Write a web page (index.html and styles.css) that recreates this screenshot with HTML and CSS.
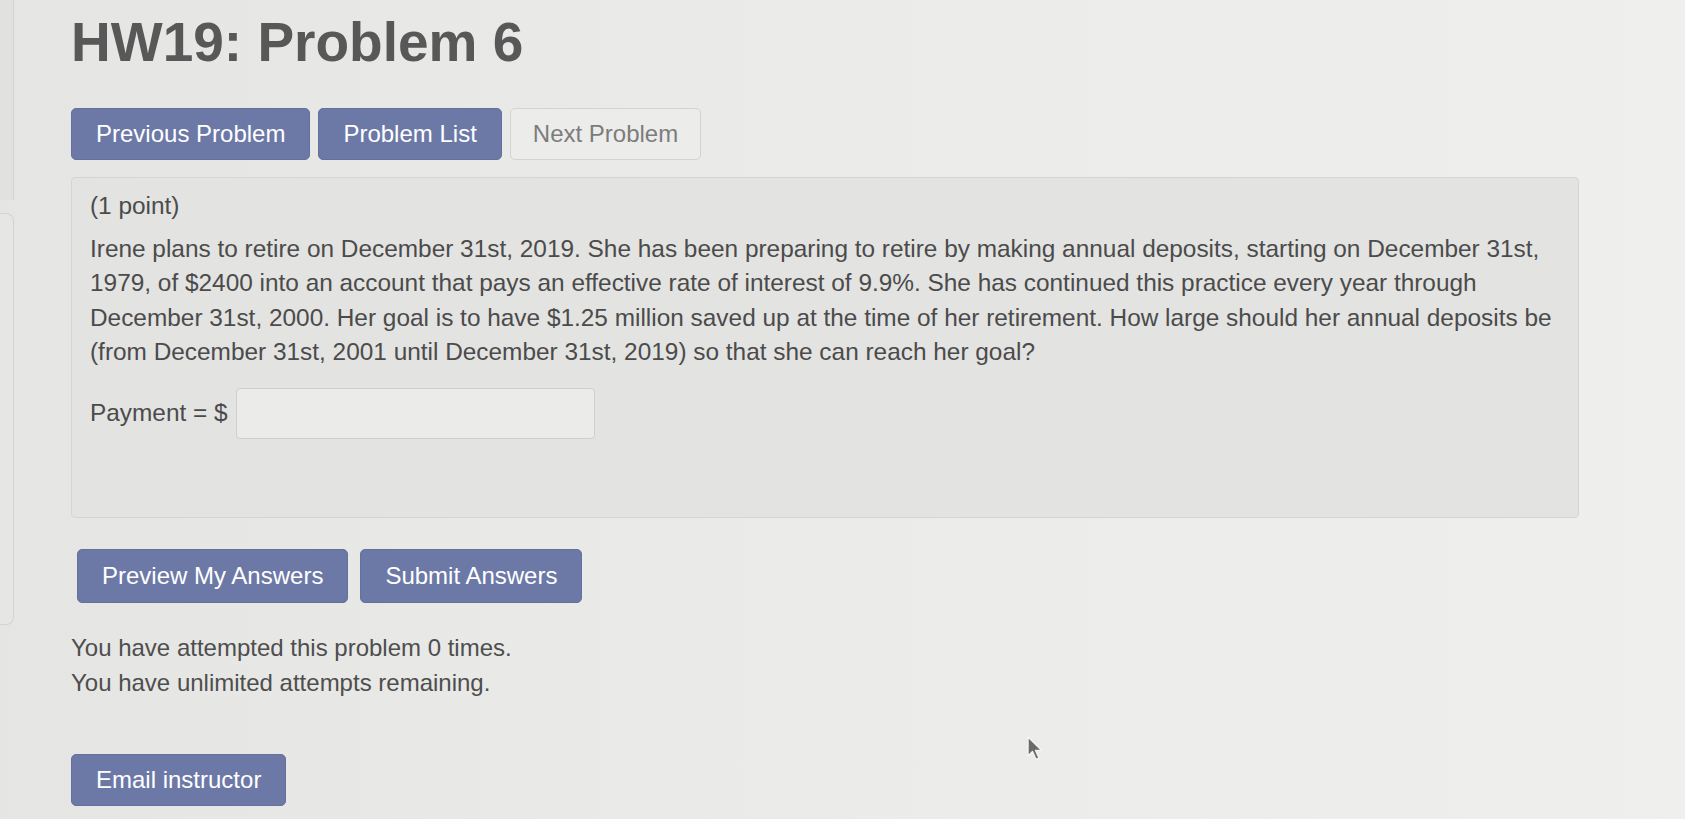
FILE: index.html
```html
<!DOCTYPE html>
<html lang="en">
<head>
<meta charset="utf-8">
<title>HW19: Problem 6</title>
<link rel="stylesheet" href="styles.css">
</head>
<body>
<div class="page">
  <aside class="sidebar">
    <div class="side-top"></div>
    <div class="side-panel"></div>
  </aside>
  <main class="main">
    <h1 class="title">HW19: Problem 6</h1>
    <nav class="nav">
      <a class="btn btn-primary">Previous Problem</a>
      <a class="btn btn-primary">Problem List</a>
      <a class="btn btn-disabled">Next Problem</a>
    </nav>
    <section class="problem">
      <div class="points">(1 point)</div>
      <p class="statement">Irene plans to retire on December 31st, 2019. She has been preparing to retire by making annual deposits, starting on December 31st, 1979, of $2400 into an account that pays an effective rate of interest of 9.9%. She has continued this practice every year through December 31st, 2000. Her goal is to have $1.25 million saved up at the time of her retirement. How large should her annual deposits be (from December 31st, 2001 until December 31st, 2019) so that she can reach her goal?</p>
      <div class="answer-row">
        <label class="answer-label" for="ans">Payment = $</label>
        <input class="answer-input" id="ans" type="text">
      </div>
    </section>
    <div class="submit-row">
      <button class="btn btn-primary btn-tall">Preview My Answers</button>
      <button class="btn btn-primary btn-tall">Submit Answers</button>
    </div>
    <div class="attempts">
      <div>You have attempted this problem 0 times.</div>
      <div>You have unlimited attempts remaining.</div>
    </div>
    <div class="email-row">
      <a class="btn btn-primary">Email instructor</a>
    </div>
  </main>
</div>
<svg class="cursor" width="18" height="26" viewBox="0 0 18 26" aria-hidden="true">
  <path d="M2 1 L2 20 L6.5 15.5 L10 23.5 L13 22.2 L9.6 14.4 L15.8 14.4 Z" fill="#6b6b6b" stroke="#f4f4f2" stroke-width="1.4" stroke-linejoin="round"/>
</svg>
</body>
</html>
```

FILE: styles.css
```css
html, body {
  margin: 0;
  padding: 0;
}

body {
  background: linear-gradient(90deg, #e5e5e3 0%, #eaeae8 40%, #efefed 100%);
  color: #4e4e4e;
  font-family: "Liberation Sans", Arial, Helvetica, sans-serif;
  font-size: 24px;
  width: 1685px;
  height: 819px;
  overflow: hidden;
}

.page {
  display: flex;
  align-items: flex-start;
}

.sidebar {
  width: 14px;
  flex: none;
  display: flex;
  flex-direction: column;
}

.side-top {
  height: 200px;
  background: #e1e1df;
  border-right: 1px solid #d5d5d3;
}

.side-panel {
  margin-top: 13px;
  height: 410px;
  border: 1px solid #d3d3d1;
  border-left: none;
  border-radius: 0 8px 8px 0;
  background: #e6e6e4;
}

.main {
  flex: 1;
  padding: 12px 106px 0 57px;
}

.title {
  margin: 0;
  font-size: 55px;
  line-height: 60px;
  font-weight: bold;
  color: #585858;
}

.nav {
  display: flex;
  gap: 8px;
  margin-top: 36px;
}

.btn {
  display: inline-block;
  box-sizing: border-box;
  font-family: inherit;
  font-size: 24px;
  line-height: 28px;
  padding: 11px 24px;
  border-radius: 5px;
  border: 1px solid transparent;
  white-space: nowrap;
  cursor: pointer;
}

.btn-primary {
  background: #6c79a7;
  border-color: #64719e;
  color: #ffffff;
}

.btn-disabled {
  background: #ececeb;
  border-color: #d3d3d2;
  color: #7c7c7c;
  padding-left: 22px;
  padding-right: 22px;
}

.btn-tall {
  padding-top: 12px;
  padding-bottom: 12px;
}

.problem {
  margin-top: 17px;
  background: #e3e3e2;
  border: 1px solid #d5d5d4;
  border-radius: 4px;
  padding: 11px 14px 78px 18px;
  font-size: 24.4px;
  line-height: 34.5px;
  color: #4b4b4b;
}

.points {
  margin-bottom: 8px;
}

.statement {
  margin: 0;
}

.answer-row {
  display: flex;
  align-items: center;
  gap: 8px;
  margin-top: 18px;
}

.answer-input {
  box-sizing: border-box;
  width: 359px;
  height: 51px;
  background: #ebebea;
  border: 1px solid #cfcfce;
  border-radius: 4px;
  font-family: inherit;
  font-size: 24px;
  padding: 0 10px;
}

.submit-row {
  display: flex;
  gap: 12px;
  margin-top: 31px;
  padding-left: 6px;
}

.attempts {
  margin-top: 27px;
  line-height: 35px;
}

.email-row {
  margin-top: 54px;
}

.cursor {
  position: absolute;
  left: 1026px;
  top: 736px;
}
```
